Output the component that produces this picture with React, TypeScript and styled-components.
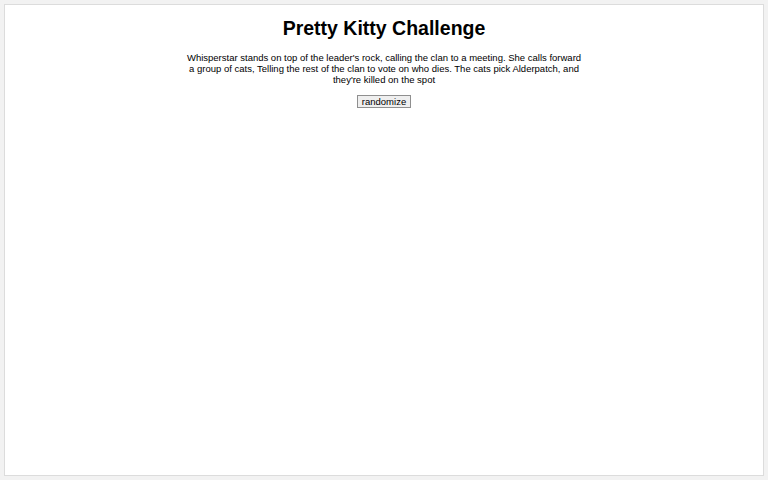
import * as React from 'react';
import styled, { createGlobalStyle } from 'styled-components';

const GlobalStyle = createGlobalStyle`
  html, body {
    margin: 0;
    height: 100%;
    background: #f2f2f2;
    font-family: 'Liberation Sans', Arial, sans-serif;
  }
  #root {
    height: 100%;
  }
`;

const story =
  "Whisperstar stands on top of the leader's rock, calling the clan to a meeting. She calls forward a group of cats, Telling the rest of the clan to vote on who dies. The cats pick Alderpatch, and they're killed on the spot";

const App: React.FC = () => {
  const [text, setText] = React.useState(story);

  return (
    <>
      <GlobalStyle />
      <StyledPage>
        <StyledCard>
          <StyledTitle>Pretty Kitty Challenge</StyledTitle>
          <StyledStory>{text}</StyledStory>
          <StyledButton onClick={() => setText(story)}>randomize</StyledButton>
        </StyledCard>
      </StyledPage>
    </>
  );
};

export default App;

const StyledPage = styled.div`
  height: 100%;
  box-sizing: border-box;
  padding: 4px;
  display: flex;
`;
const StyledCard = styled.div`
  flex: 1;
  background: #fff;
  border: 1px solid #dcdcdc;
  display: flex;
  flex-direction: column;
  align-items: center;
  padding-top: 14px;
`;
const StyledTitle = styled.h1`
  margin: 0;
  font-size: 19.5px;
  font-weight: bold;
  color: #000;
  line-height: 18px;
`;
const StyledStory = styled.p`
  margin: 15px 0 0;
  max-width: 400px;
  text-align: center;
  font-size: 9.5px;
  line-height: 11px;
  color: #000;
`;
const StyledButton = styled.button`
  margin-top: 10px;
  font-family: 'Liberation Sans', Arial, sans-serif;
  font-size: 9.5px;
  padding: 0 4px;
  height: 13px;
  line-height: 11px;
  background: #efefef;
  border: 1px solid #8f8f8f;
  border-radius: 0;
  color: #000;
`;
